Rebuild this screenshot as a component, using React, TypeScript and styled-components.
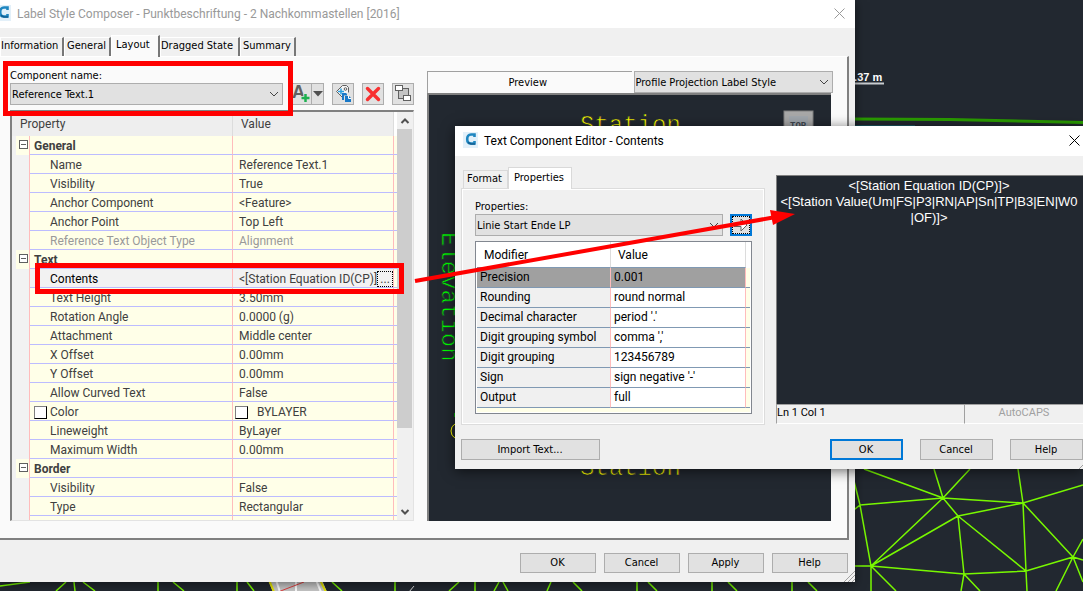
import React from 'react';
import styled, { createGlobalStyle, css } from 'styled-components';

const GlobalStyle = createGlobalStyle`
  *, *::before, *::after { box-sizing: border-box; }
  body { margin: 0; background: #222830; }
  button, select, textarea { font: inherit; color: inherit; margin: 0; border-radius: 0; }
`;

const dialogFont = '"DejaVu Sans Condensed", "DejaVu Sans", sans-serif';
const systemFont = 'Roboto, "Open Sans", sans-serif';

const Desktop = styled.div`
  position: relative;
  min-height: 591px;
  height: 100vh;
  overflow: hidden;
  background: #222830;
  color: #000;
  font: 11px/16px ${dialogFont};
`;

const Layer = styled.svg<{ $front?: boolean }>`
  position: absolute;
  inset: 0;
  width: 100%;
  height: 100%;
  pointer-events: none;
  z-index: ${(p) => (p.$front ? 3 : 0)};
`;

const ComposerWindow = styled.section`
  position: absolute;
  z-index: 1;
  top: 0;
  left: 0;
  right: 228px;
  bottom: 9px;
  display: flex;
  flex-direction: column;
  background: #f0f0f0;
  box-shadow: 0 2px 10px rgba(0, 0, 0, 0.5);
`;

const EditorWindow = styled.section`
  position: absolute;
  z-index: 2;
  top: 126px;
  left: 455px;
  right: 0;
  display: flex;
  flex-direction: column;
  background: #f0f0f0;
  box-shadow: 0 2px 12px rgba(0, 0, 0, 0.6);
`;

const TitleBar = styled.header<{ $active?: boolean }>`
  display: flex;
  align-items: center;
  gap: 6px;
  height: ${(p) => (p.$active ? 30 : 28)}px;
  padding: 0 ${(p) => (p.$active ? 2 : 9)}px 2px ${(p) => (p.$active ? 8 : 0)}px;
  background: #fff;
  color: ${(p) => (p.$active ? '#000' : '#999')};
`;

const Title = styled.h1`
  flex: 1;
  margin: 0;
  padding-top: 1px;
  font: 12px/16px ${systemFont};
  white-space: nowrap;
`;

const CloseButton = styled.button`
  display: flex;
  padding: 0;
  border: 0;
  background: none;
`;

const ComposerTabs = styled.div`
  display: flex;
  align-items: flex-end;
  height: 28px;
`;

const ComposerTab = styled.button<{ $width: number; $inset: number; $selected?: boolean }>`
  width: ${(p) => p.$width}px;
  height: 19px;
  padding: 0 0 3px ${(p) => p.$inset}px;
  border: 1px solid #fff;
  border-width: 1px 2px 0 1px;
  border-right-color: #777;
  background: #f0f0f0;
  text-align: left;
  white-space: nowrap;
  ${(p) =>
    p.$selected &&
    css`
      position: relative;
      height: 22px;
      margin-bottom: -1px;
      background: #fafafa;
    `}
`;

const ComposerPanel = styled.div`
  flex: 1;
  min-height: 0;
  display: flex;
  gap: 13px;
  margin-right: 6px;
  padding: 10px 14px 17px 10px;
  border: solid #fff;
  border-width: 1px 2px 2px 0;
  border-right-color: #808080;
  border-bottom-color: #808080;
  background: #fafafa;
`;

const PropertyColumn = styled.div`
  width: 404px;
  display: flex;
  flex-direction: column;
  gap: 5px;
`;

const ComponentBar = styled.div`
  display: flex;
  align-items: flex-end;
  gap: 8px;
`;

const ComponentField = styled.div`
  width: 273px;
  margin-right: -1px;
`;

const FieldLabel = styled.label`
  display: block;
  height: 16px;
  padding-top: 1px;
  line-height: 15px;
  white-space: nowrap;
`;

const SelectBox = styled.div`
  display: grid;
  flex: 1;
  align-items: center;
  > * {
    grid-area: 1 / 1;
  }
  > svg {
    justify-self: end;
    margin-right: 3px;
    pointer-events: none;
  }
`;

const Select = styled.select`
  appearance: none;
  width: 100%;
  height: 22px;
  padding: 2px 20px 0 1px;
  border: 1px solid #adadad;
  background: #e1e1e1;
`;

const ToolButton = styled.button`
  display: flex;
  align-items: center;
  justify-content: center;
  width: 22px;
  height: 22px;
  padding: 0;
  border: 1px solid #adadad;
  background: #e1e1e1;
`;

const SplitButton = styled.div`
  display: flex;
  ${ToolButton} + ${ToolButton} {
    width: 12px;
    border-left: 0;
  }
`;

const GridFrame = styled.div`
  flex: 1;
  min-height: 0;
  display: flex;
  overflow: hidden;
  border: solid #808080;
  border-width: 2px 1px 1px 2px;
  border-right-color: #e3e3e3;
  border-bottom-color: #e3e3e3;
  background: #ffffe8;
`;

const PropertyTable = styled.table`
  width: 385px;
  table-layout: fixed;
  border-collapse: separate;
  border-spacing: 0;
  align-self: flex-start;
  font: 12px/16px ${systemFont};
  color: #404040;
`;

const ColumnHead = styled.th`
  height: 24px;
  padding: 0 8px;
  border-right: 1px solid #dcdcdc;
  background: #eee;
  font-weight: 400;
  text-align: left;
`;

const HeadFiller = styled.th`
  padding: 0;
  background: #fff;
`;

const Gutter = styled.td<{ $group?: boolean }>`
  height: 19px;
  padding: 0 0 0 4px;
  border-right: 1px solid #ffbcbc;
  background: #f2f2f2;
  vertical-align: top;
  line-height: 0;
`;

const ExpanderCell = styled.div`
  height: 19px;
  padding: 4px 3px;
  background: #ffffe8;
`;

const Expander = styled.button`
  display: flex;
  align-items: center;
  justify-content: center;
  width: 9px;
  height: 9px;
  padding: 0;
  border: 1px solid #606060;
  background: #fff;
  &::before {
    content: '';
    width: 5px;
    height: 1px;
    background: #606060;
  }
`;

const PropertyCell = styled.td<{ $group?: boolean; $dim?: boolean; $selected?: boolean }>`
  height: 19px;
  padding: 2px 0 0 ${(p) => (p.$group ? 4 : 20)}px;
  border-right: 1px solid #ffbcbc;
  border-bottom: 1px solid #bcbcff;
  background: ${(p) => (p.$selected ? '#f2f2f2' : '#ffffe8')};
  color: ${(p) => (p.$dim ? '#999' : p.$selected ? '#000' : '#404040')};
  font-weight: ${(p) => (p.$group ? 700 : 400)};
  white-space: nowrap;
  overflow: hidden;
`;

const ValueCell = styled(PropertyCell)`
  padding-left: 6px;
  color: ${(p) => (p.$dim ? '#999' : '#404040')};
`;

const CellLine = styled.div<{ $indent: number }>`
  display: flex;
  align-items: center;
  gap: ${(p) => p.$indent}px;
`;

const SwatchName = styled(CellLine)`
  margin-left: -16px;
`;

const SwatchValue = styled(CellLine)`
  margin-left: -4px;
`;

const Swatch = styled.span`
  width: 13px;
  height: 13px;
  border: 1px solid #808080;
  border-right-color: #000;
  border-bottom-color: #000;
  background: #fff;
`;

const BrowseButton = styled.button`
  width: 18px;
  height: 16px;
  margin-left: auto;
  padding: 0;
  border: 1px dotted #000;
  background: none;
  line-height: 12px;
`;

const EdgeCell = styled.td`
  padding: 0;
  border-bottom: 1px solid #bcbcff;
  background: #ffffe8;
`;

const ScrollBar = styled.div`
  width: 16px;
  display: flex;
  flex-direction: column;
  align-items: center;
  background: #f0f0f0;
`;

const ScrollArrow = styled.button`
  display: flex;
  align-items: center;
  justify-content: center;
  width: 16px;
  height: 17px;
  padding: 0;
  border: 0;
  background: none;
`;

const ScrollTrack = styled.div`
  flex: 1;
  width: 100%;
`;

const ScrollThumb = styled.div`
  height: 80%;
  margin-right: 1px;
  background: #cdcdcd;
`;

const PreviewColumn = styled.div`
  flex: 1;
  min-width: 0;
  display: flex;
  flex-direction: column;
  padding-top: 4px;
`;

const PreviewBar = styled.div`
  display: flex;
  gap: 1px;
`;

const PreviewLabel = styled.div`
  flex: 1;
  margin-right: 1px;
  padding: 3px 4px 0 0;
  border: solid #a0a0a0;
  border-width: 1px 0 0 1px;
  text-align: center;
`;

const PreviewCanvas = styled.svg`
  flex: 1;
  min-height: 0;
  width: calc(100% - 2px);
  border: solid #808080;
  border-width: 2px 0 0 2px;
  background: #222830;
`;

const Footer = styled.footer`
  display: flex;
  justify-content: flex-end;
  gap: 8px;
  padding: 13px 7px 9px;
`;

const PushButton = styled.button<{ $width: number; $primary?: boolean }>`
  width: ${(p) => p.$width}px;
  height: ${(p) => (p.$width === 76 ? 20 : 21)}px;
  padding: 0 1px 0 0;
  border: ${(p) => (p.$primary ? '2px solid #0078d7' : '1px solid #adadad')};
  background: #e1e1e1;
`;

const Grip = styled.svg`
  position: absolute;
  right: 0;
  bottom: 0;
`;

const EditorBody = styled.div`
  display: flex;
  gap: 11px;
  padding-left: 6px;
`;

const ModifierColumn = styled.div`
  width: 304px;
  padding-top: 11px;
`;

const EditorTabs = styled.div`
  display: flex;
  align-items: flex-end;
  height: 21px;
  padding-left: 2px;
`;

const EditorTab = styled.button<{ $selected?: boolean }>`
  width: ${(p) => (p.$selected ? 64 : 45)}px;
  height: ${(p) => (p.$selected ? 22 : 18)}px;
  margin-bottom: ${(p) => (p.$selected ? -1 : 0)}px;
  position: relative;
  padding: 0 2px 1px 0;
  border: 1px solid #d9d9d9;
  border-bottom: 0;
  background: ${(p) => (p.$selected ? '#fff' : '#f0f0f0')};
`;

const EditorPanel = styled.div`
  padding: 9px 12px 10px 13px;
  border: 1px solid #dcdcdc;
  box-shadow: inset 0 0 0 1px #fff;
`;

const FieldRow = styled.div`
  display: flex;
  align-items: center;
  gap: 7px;
  margin-bottom: 5px;
`;

const InsertButton = styled(ToolButton)`
  border: 2px solid #0078d7;
  outline: 1px dotted #000;
  outline-offset: -3px;
`;

const ModifierFrame = styled.div`
  height: 173px;
  padding: 0 1px;
  border: 1px solid #828790;
  background: #ffffe8;
  box-shadow: inset 0 0 0 1px #fff;
`;

const ModifierTable = styled.table`
  width: 100%;
  table-layout: fixed;
  border-collapse: separate;
  border-spacing: 0;
  font: 12px/19px ${systemFont};
`;

const ModifierHead = styled.th`
  height: 26px;
  padding: 1px 7px 0;
  border-right: 1px solid #dcdcdc;
  border-bottom: 1px solid #8099b3;
  background: #fff;
  font-weight: 400;
  text-align: left;
`;

const ModifierCell = styled.td<{ $name?: boolean; $selected?: boolean }>`
  height: 20px;
  padding: 0 3px;
  border-right: 1px solid #ffbcbc;
  border-bottom: 1px solid #8099b3;
  background: ${(p) => (p.$selected ? '#a0a0a0' : p.$name ? '#f0f0f0' : '#fff')};
  white-space: nowrap;
`;

const ModifierEdge = styled.td`
  padding: 0;
  border-bottom: 1px solid #8099b3;
  background: #ffffe8;
`;

const TextColumn = styled.div`
  flex: 1;
  min-width: 0;
  display: flex;
  flex-direction: column;
  padding-top: 19px;
`;

const TextArea = styled.textarea`
  display: block;
  width: 100%;
  height: 229px;
  padding: 2px 2px 0 0;
  border: 1px solid #808080;
  border-right: 0;
  border-bottom: 0;
  outline: 0;
  resize: none;
  overflow: hidden;
  background: #222830;
  color: #fff;
  font: 13px/16px "Liberation Sans", Arial, sans-serif;
  text-align: center;
  white-space: pre;
`;

const StatusBar = styled.div`
  display: flex;
  height: 20px;
  font: 11px/16px ${systemFont};
`;

const StatusText = styled.div<{ $dim?: boolean }>`
  flex: ${(p) => (p.$dim ? '0 0 119px' : 1)};
  border: solid #a0a0a0;
  border-width: 1px 0 0 1px;
  border-bottom: 1px solid #fff;
  color: ${(p) => (p.$dim ? '#a0a0a0' : '#000')};
  text-align: ${(p) => (p.$dim ? 'center' : 'left')};
`;

const EditorFooter = styled.footer`
  display: flex;
  justify-content: space-between;
  padding: 14px 0 9px 6px;
`;

const ButtonGroup = styled.div`
  display: flex;
  gap: 17px;
`;

const Chevron = () => (
  <svg width="12" height="8" viewBox="0 0 12 8" fill="none" stroke="#444" aria-hidden="true">
    <path d="M2 2l4 4 4-4" />
  </svg>
);

const Cross = ({ color }: { color: string }) => (
  <svg width="13" height="13" viewBox="0 0 13 13" fill="none" stroke={color} aria-hidden="true">
    <path d="M1.500 1.500l10 10M11.500 1.500l-10 10" />
  </svg>
);

const AppLogo = ({ cropped }: { cropped?: boolean }) => (
  <svg width={cropped ? 11 : 15} height="16" viewBox={cropped ? '4 0 11 16' : '0 0 15 16'} aria-hidden="true">
    <rect width="15" height="16" fill="#e3f0f9" />
    <path d="M11.500 5V2.500H8C5.500 2.500 4.200 4.500 4.200 7S5.500 11.500 8 11.500h3.500V9" fill="none" stroke="#1f86c0" strokeWidth="2.600" />
    <path d="M5 10.500l3 1.500h4" fill="none" stroke="#135f92" strokeWidth="1.400" />
  </svg>
);

const ScrollChevron = ({ down }: { down?: boolean }) => (
  <svg width="10" height="8" viewBox="0 0 10 8" fill="none" stroke="#505050" strokeWidth="2" aria-hidden="true">
    <path d={down ? 'M1.500 2L5 5.500 8.500 2' : 'M1.500 6L5 2.500 8.500 6'} />
  </svg>
);

type Row = { name: string; value?: string; kind?: 'group' | 'dim' | 'selected' | 'color' };

const rows: Row[] = [
  { name: 'General', kind: 'group' },
  { name: 'Name', value: 'Reference Text.1' },
  { name: 'Visibility', value: 'True' },
  { name: 'Anchor Component', value: '<Feature>' },
  { name: 'Anchor Point', value: 'Top Left' },
  { name: 'Reference Text Object Type', value: 'Alignment', kind: 'dim' },
  { name: 'Text', kind: 'group' },
  { name: 'Contents', value: '<[Station Equation ID(CP)]', kind: 'selected' },
  { name: 'Text Height', value: '3.50mm' },
  { name: 'Rotation Angle', value: '0.0000 (g)' },
  { name: 'Attachment', value: 'Middle center' },
  { name: 'X Offset', value: '0.00mm' },
  { name: 'Y Offset', value: '0.00mm' },
  { name: 'Allow Curved Text', value: 'False' },
  { name: 'Color', value: 'BYLAYER', kind: 'color' },
  { name: 'Lineweight', value: 'ByLayer' },
  { name: 'Maximum Width', value: '0.00mm' },
  { name: 'Border', kind: 'group' },
  { name: 'Visibility', value: 'False' },
  { name: 'Type', value: 'Rectangular' },
  { name: '' },
];

const modifiers = [
  ['Precision', '0.001'],
  ['Rounding', 'round normal'],
  ['Decimal character', "period '.'"],
  ['Digit grouping symbol', "comma ','"],
  ['Digit grouping', '123456789'],
  ['Sign', "sign negative '-'"],
  ['Output', 'full'],
];

const terrain =
  'M864 469L943 498M934 469L943 498M970 469L943 498M943 498L1023 503M943 498L958 516M943 498L860 505M943 498L871 566' +
  'M1018 469L1023 503M1083 485L1023 503L958 516M1023 503L1026 571M1023 503L1073 557M958 516L871 566M958 516L964 574' +
  'M958 516L1026 571M860 505L871 566M850 465L860 505M850 513L860 505M850 566H871V591M871 566L896 591M871 566L964 574' +
  'M964 574L961 591M964 574L980 591M964 574L1026 571L1073 557M1026 571L1027 591M1073 557L1083 539M1073 557L1083 560' +
  'M1073 557L1056 591M1073 557L1083 582M0 586L30 582M66 582L56 591M74 582L75 591M83 582L95 591M158 582V591' +
  'M173 582L184 591M237 582V591M247 582L254 591M332 582L342 591M395 582V591M459 582L449 591M475 582V591M499 582L494 591' +
  'M503 582L508 591M551 582L547 591M573 582L582 591M637 582V591M648 582L657 591M712 582V591M728 582L737 591M792 582V591M808 582L817 591';

const Terrain = () => (
  <Layer aria-hidden="true">
    <path d={terrain} fill="none" stroke="#78f800" strokeWidth="1.500" />
    <path d="M268 580h54l5 12h-54z" fill="#c8c8c8" />
    <path d="M269 580l5 12M320 580l6 12" stroke="#e8e800" strokeWidth="2" />
    <path d="M276 580l4 12M316 580l5 12M296 580v12" stroke="#fff" strokeWidth="2" />
    <path d="M278 592l26-10" stroke="#e04040" />
    <path d="M414 586l-5 6" stroke="#ddd" />
    <path d="M850 119L950 119.500L1083 122.500" fill="none" stroke="#2a9d00" strokeWidth="3" />
    <path d="M850 125.500h65" stroke="#1c5560" />
    <text x="848" y="81" fill="#fff" fontFamily="Liberation Sans" fontSize="11" fontWeight="700">7.37 m</text>
    <path d="M850 83.500h34" stroke="#c8ccd0" strokeWidth="2" />
  </Layer>
);

const Annotations = () => (
  <Layer $front aria-hidden="true">
    <rect x="5.500" y="63.500" width="285" height="50" fill="none" stroke="#f00" strokeWidth="5" />
    <rect x="37.500" y="265.500" width="364" height="26" fill="none" stroke="#f00" strokeWidth="5" />
    <path d="M415 281L773 217.500" stroke="#f00" strokeWidth="4" />
    <path d="M770 210l25 4-22 11z" fill="#f00" />
  </Layer>
);

const PropertyRow = ({ row }: { row: Row }) => {
  const group = row.kind === 'group';
  const dim = row.kind === 'dim';
  const selected = row.kind === 'selected';
  return (
    <tr>
      <Gutter>
        {group && (
          <ExpanderCell>
            <Expander aria-label={'Collapse ' + row.name} />
          </ExpanderCell>
        )}
      </Gutter>
      <PropertyCell $group={group} $dim={dim} $selected={selected}>
        {row.kind === 'color' ? (
          <SwatchName $indent={3}><Swatch />{row.name}</SwatchName>
        ) : (
          row.name
        )}
      </PropertyCell>
      <ValueCell $dim={dim} $selected={selected}>
        {row.kind === 'color' ? (
          <SwatchValue $indent={9}><Swatch />{row.value}</SwatchValue>
        ) : selected ? (
          <CellLine $indent={0}>{row.value}<BrowseButton>...</BrowseButton></CellLine>
        ) : (
          row.value
        )}
      </ValueCell>
      <EdgeCell />
    </tr>
  );
};

const Composer = () => (
  <ComposerWindow aria-label="Label Style Composer">
    <TitleBar>
      <AppLogo cropped />
      <Title>Label Style Composer - Punktbeschriftung - 2 Nachkommastellen [2016]</Title>
      <CloseButton aria-label="Close composer"><Cross color="#999" /></CloseButton>
    </TitleBar>
    <ComposerTabs role="tablist">
      <ComposerTab role="tab" $width={64} $inset={0}>Information</ComposerTab>
      <ComposerTab role="tab" $width={47} $inset={2}>General</ComposerTab>
      <ComposerTab role="tab" aria-selected $width={49} $inset={4} $selected>Layout</ComposerTab>
      <ComposerTab role="tab" $width={80} $inset={0}>Dragged State</ComposerTab>
      <ComposerTab role="tab" $width={56} $inset={2}>Summary</ComposerTab>
    </ComposerTabs>
    <ComposerPanel>
      <PropertyColumn>
        <ComponentBar>
          <ComponentField>
            <FieldLabel htmlFor="component">Component name:</FieldLabel>
            <SelectBox>
              <Select id="component"><option>Reference Text.1</option></Select>
              <Chevron />
            </SelectBox>
          </ComponentField>
          <SplitButton>
            <ToolButton aria-label="Add text component">
              <svg width="20" height="20" viewBox="0 0 20 20" aria-hidden="true">
                <text x="1" y="14" fill="#606060" fontFamily="Liberation Sans" fontSize="18" fontWeight="700">A</text>
                <path d="M10 14h9M14.500 9.500v9" stroke="#e1e1e1" strokeWidth="4" />
                <path d="M10.500 14h8M14.500 10v8" stroke="#1eb050" strokeWidth="2.500" />
              </svg>
            </ToolButton>
            <ToolButton aria-label="Choose component type">
              <svg width="10" height="6" viewBox="0 0 10 6" aria-hidden="true"><path d="M0 0h10L5 5.500z" fill="#505050" /></svg>
            </ToolButton>
          </SplitButton>
          <ToolButton aria-label="Copy component">
            <svg width="20" height="20" viewBox="0 0 20 20" fill="none" aria-hidden="true">
              <path d="M15.500 8.500V3.500L13.500 1.500H9.500L3.500 7.500l5.500 5.500" fill="#f4f4f4" stroke="#606060" />
              <circle cx="12.500" cy="5" r="1.300" stroke="#606060" />
              <path d="M5 7.500h6M8 4.500v6" stroke="#2a9fe0" strokeWidth="1.500" />
              <path d="M9 9h4l1 1v1.500h-3V16H9z" fill="#1878c8" />
              <path d="M12 12h4l2 2v4h-6z" fill="#1878c8" />
              <path d="M15.500 12v2.500H18" stroke="#fff" />
            </svg>
          </ToolButton>
          <ToolButton aria-label="Delete component">
            <svg width="20" height="20" viewBox="0 0 20 20" aria-hidden="true">
              <path d="M4.500 4.500l11 11M15.500 4.500l-11 11" stroke="#f83030" strokeWidth="3.400" strokeLinecap="round" />
            </svg>
          </ToolButton>
          <ToolButton aria-label="Component draw order">
            <svg width="20" height="20" viewBox="0 0 20 20" fill="none" stroke="#606060" aria-hidden="true">
              <rect x="5.500" y="4.500" width="10" height="10" fill="#c4c4c4" />
              <rect x="2.500" y="1.500" width="7" height="5" fill="#fff" />
              <rect x="10.500" y="11.500" width="7" height="5" fill="#fff" />
            </svg>
          </ToolButton>
        </ComponentBar>
        <GridFrame>
          <PropertyTable>
            <colgroup>
              <col style={{ width: 18 }} />
              <col style={{ width: 203 }} />
              <col style={{ width: 161 }} />
              <col style={{ width: 3 }} />
            </colgroup>
            <thead>
              <tr>
                <ColumnHead colSpan={2}>Property</ColumnHead>
                <ColumnHead>Value</ColumnHead>
                <HeadFiller />
              </tr>
            </thead>
            <tbody>
              {rows.map((row, i) => <PropertyRow key={i} row={row} />)}
            </tbody>
          </PropertyTable>
          <ScrollBar>
            <ScrollArrow aria-label="Scroll up"><ScrollChevron /></ScrollArrow>
            <ScrollTrack><ScrollThumb /></ScrollTrack>
            <ScrollArrow aria-label="Scroll down"><ScrollChevron down /></ScrollArrow>
          </ScrollBar>
        </GridFrame>
      </PropertyColumn>
      <PreviewColumn>
        <PreviewBar>
          <PreviewLabel>Preview</PreviewLabel>
          <SelectBox>
            <Select aria-label="Preview style"><option>Profile Projection Label Style</option></Select>
            <Chevron />
          </SelectBox>
        </PreviewBar>
        <PreviewCanvas aria-label="Label preview">
          <g fontFamily="Liberation Mono" fontSize="24" stroke="#222830" strokeWidth="0.700">
            <text x="151" y="37" fill="#ff0">Station</text>
            <text x="151" y="380" fill="#ff0">Station</text>
            <text transform="translate(13 137) rotate(90)" fill="#0f0">Elevation</text>
          </g>
          <path d="M26 329q-4 2-4 7t4 7" fill="none" stroke="#ff0" />
          <path d="M26 318v4" stroke="#0a0" strokeWidth="2" />
          <rect x="355" y="16" width="29" height="29" fill="#a8a8a8" stroke="#808080" />
          <rect x="360" y="21" width="19" height="19" fill="#a0a6ac" />
          <text x="361" y="33" fill="#404850" fontFamily="Liberation Mono" fontSize="9" fontWeight="700">TOP</text>
        </PreviewCanvas>
      </PreviewColumn>
    </ComposerPanel>
    <Footer>
      <PushButton $width={76}>OK</PushButton>
      <PushButton $width={76}>Cancel</PushButton>
      <PushButton $width={76}>Apply</PushButton>
      <PushButton $width={76}>Help</PushButton>
    </Footer>
    <Grip width="12" height="12" stroke="#a0a0a0" aria-hidden="true">
      <path d="M1 12L12 1M5 12L12 5M9 12L12 9" />
    </Grip>
  </ComposerWindow>
);

const TextEditor = () => (
  <EditorWindow role="dialog" aria-label="Text Component Editor">
    <TitleBar $active>
      <AppLogo />
      <Title>Text Component Editor - Contents</Title>
      <CloseButton aria-label="Close editor"><Cross color="#000" /></CloseButton>
    </TitleBar>
    <EditorBody>
      <ModifierColumn>
        <EditorTabs role="tablist">
          <EditorTab role="tab">Format</EditorTab>
          <EditorTab role="tab" aria-selected $selected>Properties</EditorTab>
        </EditorTabs>
        <EditorPanel>
          <FieldLabel htmlFor="property">Properties:</FieldLabel>
          <FieldRow>
            <SelectBox>
              <Select id="property"><option>Linie Start Ende LP</option></Select>
              <Chevron />
            </SelectBox>
            <InsertButton aria-label="Insert property">
              <svg width="18" height="18" viewBox="0 0 18 18" fill="#fff" stroke="#606060" aria-hidden="true">
                <path d="M2 7.500h7V3l6 6-6 6v-4.500H2z" />
              </svg>
            </InsertButton>
          </FieldRow>
          <ModifierFrame>
            <ModifierTable>
              <colgroup>
                <col style={{ width: 134 }} />
                <col style={{ width: 135 }} />
                <col />
              </colgroup>
              <thead>
                <tr>
                  <ModifierHead>Modifier</ModifierHead>
                  <ModifierHead>Value</ModifierHead>
                  <HeadFiller />
                </tr>
              </thead>
              <tbody>
                {modifiers.map(([name, value], i) => (
                  <tr key={name}>
                    <ModifierCell $name $selected={i === 0}>{name}</ModifierCell>
                    <ModifierCell $selected={i === 0}>{value}</ModifierCell>
                    <ModifierEdge />
                  </tr>
                ))}
              </tbody>
            </ModifierTable>
          </ModifierFrame>
        </EditorPanel>
      </ModifierColumn>
      <TextColumn>
        <TextArea
          aria-label="Label text"
          defaultValue={'<[Station Equation ID(CP)]>\n<[Station Value(Um|FS|P3|RN|AP|Sn|TP|B3|EN|W0\n|OF)]>'}
        />
        <StatusBar>
          <StatusText>Ln 1 Col 1</StatusText>
          <StatusText $dim>AutoCAPS</StatusText>
        </StatusBar>
      </TextColumn>
    </EditorBody>
    <EditorFooter>
      <PushButton $width={139}>Import Text...</PushButton>
      <ButtonGroup>
        <PushButton $width={73} $primary>OK</PushButton>
        <PushButton $width={73}>Cancel</PushButton>
        <PushButton $width={73}>Help</PushButton>
      </ButtonGroup>
    </EditorFooter>
    <Grip width="5" height="5" stroke="#a0a0a0" aria-hidden="true">
      <path d="M1 5L5 1" />
    </Grip>
  </EditorWindow>
);

export default function App() {
  return (
    <Desktop>
      <GlobalStyle />
      <Terrain />
      <Composer />
      <TextEditor />
      <Annotations />
    </Desktop>
  );
}
